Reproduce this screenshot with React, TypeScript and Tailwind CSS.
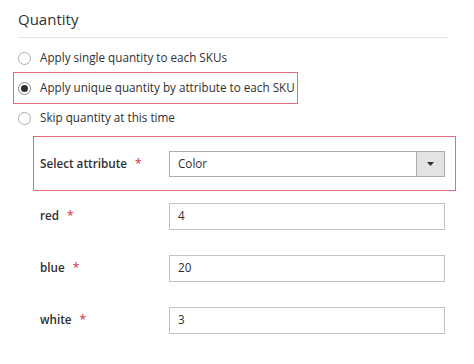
import React from "react";

const font = { fontFamily: '"Open Sans", "Liberation Sans", sans-serif' };

function Radio({ checked }: { checked?: boolean }) {
  return (
    <span
      className={
        checked
          ? "w-[13px] h-[13px] rounded-full border border-[#8a8a8a] bg-white flex items-center justify-center shrink-0"
          : "w-[13px] h-[13px] rounded-full border border-[#adadad] bg-white flex items-center justify-center shrink-0"
      }
    >
      {checked && <span className="w-[7px] h-[7px] rounded-full bg-[#303030]" />}
    </span>
  );
}

function Asterisk() {
  return <span className="text-[#e0485c] text-[12px] ml-[8px]">*</span>;
}

function Field({ label, value }: { label: string; value: string }) {
  return (
    <div className="flex items-center h-[26px] pl-[22px]">
      <div className="w-[129px] flex items-center text-[11.7px] font-semibold text-[#303030]">
        <span>{label}</span>
        <Asterisk />
      </div>
      <div className="w-[276px] h-[27px] border border-[#c2c2c2] bg-white flex items-center pl-[8px] text-[11.7px] text-[#303030]">
        {value}
      </div>
    </div>
  );
}

export default function App() {
  return (
    <div className="w-[474px] h-[364px] bg-white text-[#303030]" style={font}>
      <div className="pl-[18px] pr-[26px]">
        <div className="pt-[8px] h-[38px] border-b border-[#e3e3e3] text-[15px] leading-[22px] text-[#303030]">
          Quantity
        </div>
      </div>
      <div className="mt-[6px] pl-[13px]">
        <div className="flex items-center h-[28px] pl-[5px] gap-[9px] text-[11.7px]">
          <Radio />
          <span>Apply single quantity to each SKUs</span>
        </div>
        <div className="w-[285px] flex items-center h-[32px] pl-[4px] gap-[9px] text-[11.7px] border-[1.5px] border-[#e46b7b]">
          <Radio checked />
          <span className="whitespace-nowrap">Apply unique quantity by attribute to each SKU</span>
        </div>
        <div className="flex items-center h-[28px] pl-[5px] gap-[9px] text-[11.7px]">
          <Radio />
          <span>Skip quantity at this time</span>
        </div>
      </div>
      <div className="ml-[33px] mt-[4px] w-[423px] h-[55px] border-[1.5px] border-[#e46b7b] flex items-center pl-[6px]">
        <div className="w-[129px] flex items-center text-[11.7px] font-semibold text-[#303030]">
          <span>Select attribute</span>
          <Asterisk />
        </div>
        <div className="w-[276px] h-[26px] border border-[#adadad] bg-white flex items-stretch text-[11.7px] text-[#303030]">
          <div className="flex-1 flex items-center pl-[8px]">Color</div>
          <div className="w-[28px] bg-[#e3e3e3] border-l border-[#adadad] flex items-center justify-center">
            <svg width="7" height="4" viewBox="0 0 7 4">
              <path d="M0 0 L7 0 L3.5 4 Z" fill="#303030" />
            </svg>
          </div>
        </div>
      </div>
      <div className="mt-[12px] flex flex-col gap-[26px] pl-[18px]">
        <Field label="red" value="4" />
        <Field label="blue" value="20" />
        <Field label="white" value="3" />
      </div>
    </div>
  );
}
